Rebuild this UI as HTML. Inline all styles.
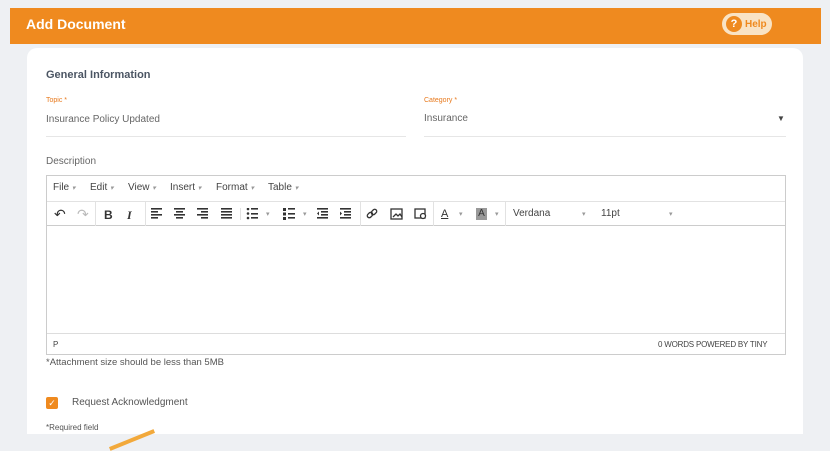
<!DOCTYPE html>
<html><head><meta charset="utf-8"><style>
*{margin:0;padding:0;box-sizing:border-box}
body{width:830px;height:444px;background:#eef0f3;font-family:"Liberation Sans",sans-serif;position:relative;overflow:hidden;color:#555}
.abs{position:absolute}
.hdr{left:10px;top:8px;width:811px;height:36px;background:#ef8a1f}
.hdr .t{left:16px;top:8px;color:#fff;font-weight:bold;font-size:14px}
.help{left:712px;top:5px;width:50px;height:22px;border-radius:11px;background:#f9e3c4}
.help .q{left:4px;top:3px;width:16px;height:16px;border-radius:50%;background:#ef8a1f;color:#fff;font-size:11px;font-weight:bold;text-align:center;line-height:16px}
.help .h{left:23px;top:6px;font-size:10px;color:#ef8a1f;font-weight:bold}
.card{left:27px;top:48px;width:776px;height:386px;background:#fff;border-radius:10px 10px 0 0}
.lbl{font-size:7px;color:#e8791c}
.val{font-size:10px;color:#666}
.line{height:1px;background:#e6e6e6}
.ed{left:46px;top:175px;width:740px;height:180px;border:1px solid #ccc}
.mb span{position:absolute;top:6px;font-size:10px;color:#444}
.c{font-size:7px;color:#999}
.tb{position:absolute;top:25px;left:0;width:738px;height:25px;border-top:1px solid #e2e2e2;border-bottom:1px solid #ccc}
.sep{position:absolute;top:0;width:1px;height:24px;background:#e2e2e2}
.ic{position:absolute;top:6px;font-size:12px;color:#333}
</style></head><body>
<div class="abs hdr"><div class="abs t">Add Document</div>
<div class="abs help"><div class="abs q">?</div><div class="abs h">Help</div></div></div>
<div class="abs card"></div>
<div class="abs" style="left:46px;top:69px;font-size:11px;font-weight:bold;color:#4b5563">General Information</div>
<div class="abs lbl" style="left:46px;top:97px">Topic *</div>
<div class="abs val" style="left:46px;top:114px">Insurance Policy Updated</div>
<div class="abs line" style="left:46px;top:136px;width:360px"></div>
<div class="abs lbl" style="left:424px;top:97px">Category *</div>
<div class="abs val" style="left:424px;top:113px">Insurance</div>
<div class="abs" style="left:777px;top:114px;font-size:8px;color:#444">▼</div>
<div class="abs line" style="left:424px;top:136px;width:362px"></div>
<div class="abs val" style="left:46px;top:156px">Description</div>
<div class="abs ed">
 <div class="mb"><span style="left:6px">File <i class="c">▾</i></span><span style="left:43px">Edit <i class="c">▾</i></span><span style="left:81px">View <i class="c">▾</i></span><span style="left:123px">Insert <i class="c">▾</i></span><span style="left:169px">Format <i class="c">▾</i></span><span style="left:221px">Table <i class="c">▾</i></span></div>
 <div class="tb">
  <div class="ic" style="left:7px;top:4px;font-size:14px">↶</div>
  <div class="ic" style="left:30px;top:4px;font-size:14px;color:#bbb">↷</div>
  <div class="sep" style="left:48px"></div>
  <div class="ic" style="left:57px;font-weight:bold">B</div>
  <div class="ic" style="left:80px;font-style:italic;font-family:'Liberation Serif';font-weight:bold">I</div>
  <div class="sep" style="left:98px"></div>
  <svg class="abs" style="left:104px;top:6px" width="200" height="12" fill="#333">
   <rect x="0" y="0" width="11" height="1.6"/><rect x="0" y="3" width="7" height="1.6"/><rect x="0" y="6" width="11" height="1.6"/><rect x="0" y="9" width="7" height="1.6"/>
   <rect x="23" y="0" width="11" height="1.6"/><rect x="25" y="3" width="7" height="1.6"/><rect x="23" y="6" width="11" height="1.6"/><rect x="25" y="9" width="7" height="1.6"/>
   <rect x="46" y="0" width="11" height="1.6"/><rect x="50" y="3" width="7" height="1.6"/><rect x="46" y="6" width="11" height="1.6"/><rect x="50" y="9" width="7" height="1.6"/>
   <rect x="70" y="0" width="11" height="1.6"/><rect x="70" y="3" width="11" height="1.6"/><rect x="70" y="6" width="11" height="1.6"/><rect x="70" y="9" width="11" height="1.6"/>
   <rect x="89" y="0" width="1" height="12" fill="#e2e2e2"/>
   <circle cx="97" cy="1" r="1.3"/><circle cx="97" cy="5.5" r="1.3"/><circle cx="97" cy="10" r="1.3"/><rect x="100" y="0" width="7" height="1.6"/><rect x="100" y="5" width="7" height="1.6"/><rect x="100" y="9" width="7" height="1.6"/>
   <rect x="132" y="0" width="3" height="3"/><rect x="132" y="4.5" width="3" height="3"/><rect x="132" y="9" width="3" height="3"/><rect x="137" y="0" width="7" height="1.6"/><rect x="137" y="5" width="7" height="1.6"/><rect x="137" y="9" width="7" height="1.6"/>
   <rect x="166" y="0" width="11" height="1.6"/><rect x="170" y="3" width="7" height="1.6"/><rect x="170" y="6" width="7" height="1.6"/><rect x="166" y="9" width="11" height="1.6"/><path d="M168 3.5 l-2 2 l2 2z"/>
   <rect x="189" y="0" width="11" height="1.6"/><rect x="193" y="3" width="7" height="1.6"/><rect x="193" y="6" width="7" height="1.6"/><rect x="189" y="9" width="11" height="1.6"/><path d="M189 3.5 l2 2 l-2 2z"/>
  </svg>
  <div class="c abs" style="left:219px;top:8px">▾</div>
  <div class="c abs" style="left:256px;top:8px">▾</div>
  <div class="sep" style="left:313px"></div>
  <svg class="abs" style="left:319px;top:6px" width="110" height="13" fill="none" stroke="#333" stroke-width="1.3">
   <rect x="1" y="5" width="6" height="4" rx="2" transform="rotate(-45 4 7)"/><rect x="5" y="2" width="6" height="4" rx="2" transform="rotate(-45 8 4)"/>
   <rect x="25" y="1" width="11" height="10"/><path d="M27 9 l3-3 l2 2 l2-2 l2 3" />
   <rect x="49" y="1" width="10" height="9"/><circle cx="57" cy="8" r="2.5" fill="#fff"/>
  </svg>
  <div class="sep" style="left:386px"></div>
  <div class="ic" style="left:394px;font-size:11px;text-decoration:underline">A</div>
  <div class="c abs" style="left:412px;top:8px">▾</div>
  <div class="abs" style="left:429px;top:6px;width:11px;height:12px;background:#999;color:#333;font-size:10px;text-align:center">A</div>
  <div class="c abs" style="left:448px;top:8px">▾</div>
  <div class="sep" style="left:458px"></div>
  <div class="ic" style="left:466px;font-size:10px;color:#444;top:6px">Verdana</div>
  <div class="c abs" style="left:535px;top:8px">▾</div>
  <div class="ic" style="left:554px;font-size:10px;color:#444;top:6px">11pt</div>
  <div class="c abs" style="left:622px;top:8px">▾</div>
 </div>
 <div class="abs" style="left:0;top:157px;width:738px;height:1px;background:#ddd"></div>
 <div class="abs" style="left:6px;top:164px;font-size:8px;color:#444">P</div>
 <div class="abs" style="left:611px;top:164px;font-size:8px;color:#444;letter-spacing:-0.2px">0 WORDS POWERED BY TINY</div>
</div>
<div class="abs" style="left:46px;top:357px;font-size:9.5px;color:#555">*Attachment size should be less than 5MB</div>
<div class="abs" style="left:46px;top:397px;width:12px;height:12px;background:#ef8a1f;border-radius:2px;color:#fff;font-size:9px;text-align:center;line-height:12px">✓</div>
<div class="abs" style="left:72px;top:397px;font-size:10px;color:#555">Request Acknowledgment</div>
<div class="abs" style="left:46px;top:423px;font-size:8px;color:#555">*Required field</div>
<div class="abs" style="left:108px;top:438px;width:48px;height:4px;background:#f2a93b;transform:rotate(-22deg)"></div>
</body></html>
